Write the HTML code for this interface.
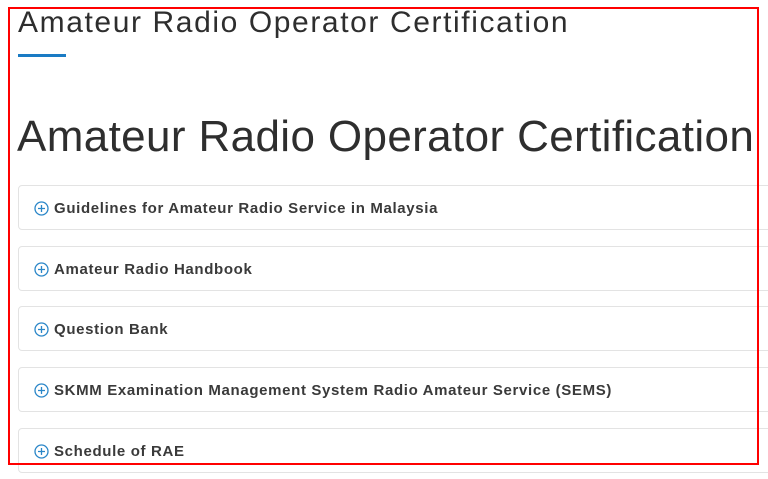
<!DOCTYPE html>
<html><head><style>
body{margin:0;width:768px;height:479px;overflow:hidden;background:#fff;font-family:"Liberation Sans",sans-serif;color:#333;position:relative}
.h1{position:absolute;left:18px;top:4px;font-size:30px;line-height:38px;letter-spacing:1.6px;white-space:nowrap;color:#2e2e2e}
.bar{position:absolute;left:18px;top:54px;width:48px;height:3px;background:#1a7bc4}
.h2{position:absolute;left:17px;top:111px;font-size:44px;line-height:52px;letter-spacing:0.37px;white-space:nowrap;color:#2e2e2e}
.card{position:absolute;left:18px;width:770px;height:45px;border:1px solid #e3e3e3;border-radius:4px;box-sizing:border-box}
.card span{position:absolute;left:35px;top:13px;font-size:15px;line-height:20px;color:#3a3a3a;letter-spacing:0.65px;white-space:nowrap;font-weight:bold}
.card svg{position:absolute;left:15px;top:15px}
.red{position:absolute;left:8px;top:7px;width:751px;height:458px;border:2px solid #f00;box-sizing:border-box}
</style></head><body>
<div class="h1">Amateur Radio Operator Certification</div>
<div class="bar"></div>
<div class="h2">Amateur Radio Operator Certification</div>
<div class="card" style="top:185px"><svg width="15" height="15" viewBox="0 0 15 15"><circle cx="7.5" cy="7.5" r="6.5" fill="none" stroke="#2a86c8" stroke-width="1.3"/><path d="M7.5 4v7M4 7.5h7" stroke="#2a86c8" stroke-width="1.3"/></svg><span>Guidelines for Amateur Radio Service in Malaysia</span></div>
<div class="card" style="top:246px"><svg width="15" height="15" viewBox="0 0 15 15"><circle cx="7.5" cy="7.5" r="6.5" fill="none" stroke="#2a86c8" stroke-width="1.3"/><path d="M7.5 4v7M4 7.5h7" stroke="#2a86c8" stroke-width="1.3"/></svg><span>Amateur Radio Handbook</span></div>
<div class="card" style="top:306px"><svg width="15" height="15" viewBox="0 0 15 15"><circle cx="7.5" cy="7.5" r="6.5" fill="none" stroke="#2a86c8" stroke-width="1.3"/><path d="M7.5 4v7M4 7.5h7" stroke="#2a86c8" stroke-width="1.3"/></svg><span>Question Bank</span></div>
<div class="card" style="top:367px"><svg width="15" height="15" viewBox="0 0 15 15"><circle cx="7.5" cy="7.5" r="6.5" fill="none" stroke="#2a86c8" stroke-width="1.3"/><path d="M7.5 4v7M4 7.5h7" stroke="#2a86c8" stroke-width="1.3"/></svg><span>SKMM Examination Management System Radio Amateur Service (SEMS)</span></div>
<div class="card" style="top:428px"><svg width="15" height="15" viewBox="0 0 15 15"><circle cx="7.5" cy="7.5" r="6.5" fill="none" stroke="#2a86c8" stroke-width="1.3"/><path d="M7.5 4v7M4 7.5h7" stroke="#2a86c8" stroke-width="1.3"/></svg><span>Schedule of RAE</span></div>
<div class="red"></div>
</body></html>
